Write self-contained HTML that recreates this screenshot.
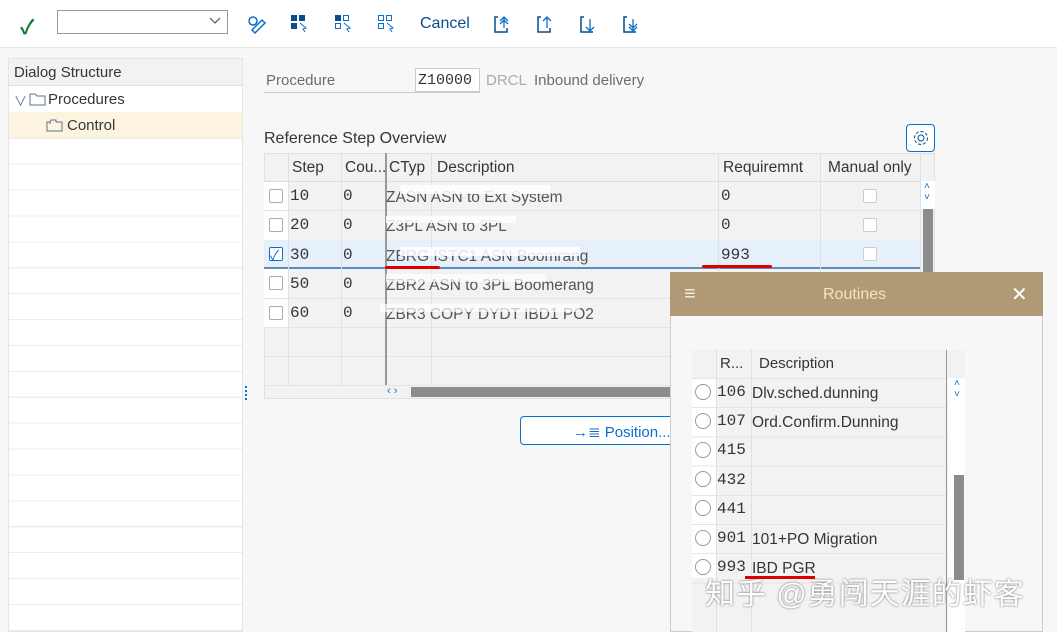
<!DOCTYPE html>
<html><head><meta charset="utf-8"><style>
*{box-sizing:border-box;margin:0;padding:0}
body{width:1057px;height:632px;overflow:hidden;background:#f7f7f7;font-family:"Liberation Sans","Noto Sans CJK SC",sans-serif;color:#32363a;position:relative;font-size:15px}
.a{position:absolute}
.mono{font-family:"Liberation Mono",monospace}
.cb{position:absolute;width:14px;height:14px;border:1px solid #aaa;background:#fff;border-radius:2px}
.rad{position:absolute;width:16px;height:16px;border:1px solid #999;border-radius:50%;background:#fff}
.ic{position:absolute;top:14px}
</style></head><body>
<div class="a" style="left:0;top:0;width:1057px;height:48px;background:#fff;border-bottom:1px solid #e5e5e5"></div>
<div class="a" style="left:20px;top:11px;color:#107e3e;font-size:20px;font-weight:bold">✓</div>
<div class="a" style="left:57px;top:10px;width:171px;height:24px;border:1px solid #999;background:#fff"></div>
<svg class="a" style="left:208px;top:16px" width="14" height="10"><path d="M2 2l5 5 5-5" stroke="#666" fill="none" stroke-width="1.3"/></svg>
<svg class="ic" style="left:247px" width="20" height="22"><circle cx="6" cy="7" r="4" stroke="#0a6ed1" fill="none" stroke-width="1.5"/><path d="M5 16l10-10 3 3-10 10z" stroke="#0a6ed1" fill="none" stroke-width="1.5"/></svg>
<svg class="ic" style="left:290px" width="20" height="20"><rect x="1" y="1" width="6" height="6" fill="#0a4d8c"/><rect x="9" y="1" width="6" height="6" fill="#0a4d8c"/><rect x="1" y="9" width="6" height="6" fill="#0a4d8c"/><path d="M10 9l6 5-3 1 2 3" stroke="#0a6ed1" fill="none"/></svg>
<svg class="ic" style="left:334px" width="20" height="20"><rect x="1" y="1" width="6" height="6" fill="#0a4d8c"/><rect x="9.5" y="1.5" width="5" height="5" stroke="#0a6ed1" fill="none"/><rect x="1.5" y="9.5" width="5" height="5" stroke="#0a6ed1" fill="none"/><path d="M10 9l6 5-3 1 2 3" stroke="#0a6ed1" fill="none"/></svg>
<svg class="ic" style="left:377px" width="20" height="20"><rect x="1.5" y="1.5" width="5" height="5" stroke="#0a6ed1" fill="none"/><rect x="9.5" y="1.5" width="5" height="5" stroke="#0a6ed1" fill="none"/><rect x="1.5" y="9.5" width="5" height="5" stroke="#0a6ed1" fill="none"/><path d="M10 9l6 5-3 1 2 3" stroke="#0a6ed1" fill="none"/></svg>
<div class="a" style="left:420px;top:15px;color:#0a4d8c;font-size:16px">Cancel</div>
<svg class="ic" style="left:492px" width="20" height="22"><path d="M6 3H3v15h12V14M6 3" stroke="#0a4d8c" fill="none" stroke-width="1.5"/><path d="M12 14V3M8 7l4-4 4 4M8 10l4-4 4 4" stroke="#0a6ed1" fill="none" stroke-width="1.3"/></svg>
<svg class="ic" style="left:535px" width="20" height="22"><path d="M6 3H3v15h12V14" stroke="#0a4d8c" fill="none" stroke-width="1.5"/><path d="M12 14V3M8 7l4-4 4 4" stroke="#0a6ed1" fill="none" stroke-width="1.3"/></svg>
<svg class="ic" style="left:578px" width="20" height="22"><path d="M6 3H3v15h12" stroke="#0a4d8c" fill="none" stroke-width="1.5"/><path d="M12 5v12M8 13l4 4 4-4" stroke="#0a6ed1" fill="none" stroke-width="1.3"/></svg>
<svg class="ic" style="left:621px" width="20" height="22"><path d="M6 3H3v15h12" stroke="#0a4d8c" fill="none" stroke-width="1.5"/><path d="M12 5v12M8 10l4 4 4-4M8 13l4 4 4-4" stroke="#0a6ed1" fill="none" stroke-width="1.3"/></svg>

<div class="a" style="left:8px;top:58px;width:235px;height:574px;background:#fff;border:1px solid #e5e5e5;
background-image:repeating-linear-gradient(to bottom,transparent 0,transparent 24.8px,#ececec 24.8px,#ececec 25.9px);background-position:0 28px"></div>
<div class="a" style="left:9px;top:59px;width:233px;height:27px;background:#f2f2f2;border-bottom:1px solid #e0e0e0"></div>
<div class="a" style="left:14px;top:64px">Dialog Structure</div>
<div class="a" style="left:9px;top:112px;width:233px;height:26px;background:#fcf4df"></div>
<div class="a" style="left:14px;top:91px;color:#5b738b;font-size:13px">∨</div>
<svg class="a" style="left:29px;top:92px" width="18" height="14"><path d="M1 2h5l2 2h8v9H1z" stroke="#5b738b" fill="none"/></svg>
<div class="a" style="left:48px;top:91px">Procedures</div>
<svg class="a" style="left:46px;top:118px" width="18" height="14"><path d="M1 4h3l1-2h5v2h6v9H1zM4 4v2" stroke="#5b738b" fill="none"/></svg>
<div class="a" style="left:67px;top:117px">Control</div>
<div class="a" style="left:245px;top:386px;width:2px;height:14px;border-left:2px dotted #0a6ed1"></div>

<div class="a" style="left:266px;top:72px;color:#6a6d70">Procedure</div>
<div class="a" style="left:264px;top:92px;width:216px;border-top:1px solid #ccc"></div>
<div class="a mono" style="left:415px;top:68px;width:65px;height:24px;border:1px solid #ccc;background:#fff;padding:3px 2px;font-size:15px">Z10000</div>
<div class="a" style="left:486px;top:72px;color:#aaa">DRCL</div>
<div class="a" style="left:534px;top:72px;color:#6a6d70">Inbound delivery</div>
<div class="a" style="left:264px;top:130px;font-size:16px">Reference Step Overview</div>
<div class="a" style="left:906px;top:124px;width:29px;height:28px;border:1.5px solid #0a6ed1;border-radius:4px;background:#fff"></div>
<svg class="a" style="left:911px;top:129px" width="20" height="18"><circle cx="10" cy="9" r="3" stroke="#0a4d8c" fill="none"/><circle cx="10" cy="9" r="6.5" stroke="#0a4d8c" fill="none" stroke-dasharray="3 2"/></svg>

<div class="a" style="left:264px;top:153px;width:671px;height:246px;background:#f2f2f2;border:1px solid #e0e0e0"></div>
<div class="a" style="left:264px;top:181px;width:24px;height:146px;background:#fff"></div>
<div class="a" style="left:264px;top:240px;width:656px;height:29px;background:#e5f0fa;border-bottom:2px solid #5b8dba"></div>
<div class="a" style="left:264px;top:181px;width:656px;height:1px;background:#ddd"></div>
<div class="a" style="left:264px;top:210px;width:656px;height:1px;background:#e4e4e4"></div>
<div class="a" style="left:264px;top:298px;width:656px;height:1px;background:#e4e4e4"></div>
<div class="a" style="left:264px;top:327px;width:656px;height:1px;background:#e4e4e4"></div>
<div class="a" style="left:264px;top:356px;width:656px;height:1px;background:#e4e4e4"></div>
<div class="a" style="left:264px;top:385px;width:656px;height:1px;background:#e4e4e4"></div>
<div class="a" style="left:288px;top:153px;width:1px;height:232px;background:#e0e0e0"></div>
<div class="a" style="left:341px;top:153px;width:1px;height:232px;background:#e0e0e0"></div>
<div class="a" style="left:385px;top:153px;width:2px;height:232px;background:#999"></div>
<div class="a" style="left:431px;top:153px;width:1px;height:232px;background:#e0e0e0"></div>
<div class="a" style="left:718px;top:153px;width:1px;height:232px;background:#e0e0e0"></div>
<div class="a" style="left:820px;top:153px;width:1px;height:232px;background:#e0e0e0"></div>
<div class="a" style="left:920px;top:153px;width:1px;height:232px;background:#e0e0e0"></div>
<div class="a" style="left:921px;top:181px;width:14px;height:28px;background:#fff"></div>
<div class="a" style="left:923px;top:209px;width:10px;height:90px;background:#8c8c8c"></div>
<div class="a" style="left:924px;top:181px;color:#0a6ed1;font-size:10px;line-height:11px">˄<br>˅</div>
<div class="a" style="left:411px;top:387px;width:260px;height:10px;background:#8c8c8c"></div>
<div class="a" style="left:387px;top:385px;color:#0a6ed1;font-size:11px">‹ ›</div>

<div class="a" style="left:292px;top:159px;font-size:15.5px">Step</div>
<div class="a" style="left:345px;top:159px;font-size:15.5px">Cou...</div>
<div class="a" style="left:389px;top:159px;font-size:15.5px">CTyp</div>
<div class="a" style="left:437px;top:159px;font-size:15.5px">Description</div>
<div class="a" style="left:723px;top:159px;font-size:15.5px">Requiremnt</div>
<div class="a" style="left:828px;top:159px;font-size:15.5px">Manual only</div>

<div class="cb" style="left:269px;top:189px"></div>
<div class="cb" style="left:269px;top:218px"></div>
<div class="cb" style="left:269px;top:247px;border-color:#0a6ed1"></div><div class="a" style="left:270px;top:245px;color:#0a6ed1;font-size:13px">✓</div>
<div class="cb" style="left:269px;top:276px"></div>
<div class="cb" style="left:269px;top:306px"></div>
<div class="cb" style="left:863px;top:189px;border-color:#ccc"></div>
<div class="cb" style="left:863px;top:218px;border-color:#ccc"></div>
<div class="cb" style="left:863px;top:247px;border-color:#ccc"></div>

<div class="a mono" style="left:290px;top:182px;line-height:29.3px;font-size:16px">10<br>20<br>30<br>50<br>60</div>
<div class="a mono" style="left:343px;top:182px;line-height:29.3px;font-size:16px">0<br>0<br>0<br>0<br>0</div>
<div class="a mono" style="left:721px;top:182px;line-height:29.3px;font-size:16px">0<br>0<br>993</div>
<div class="a" style="left:386px;top:183px;line-height:29.3px;color:#555;font-size:15.5px">ZASN ASN to Ext System<br>Z3PL ASN to 3PL<br>ZBRG ISTC1 ASN Boomrang<br>ZBR2 ASN to 3PL Boomerang<br>ZBR3 COPY DYDT IBD1 PO2</div>
<div class="a" style="left:400px;top:185px;width:150px;height:9px;background:#fff;opacity:.85"></div>
<div class="a" style="left:386px;top:216px;width:130px;height:7px;background:#fff;opacity:.85"></div>
<div class="a" style="left:400px;top:247px;width:180px;height:9px;background:#fff;opacity:.85"></div>
<div class="a" style="left:386px;top:274px;width:160px;height:8px;background:#fff;opacity:.7"></div>
<div class="a" style="left:380px;top:304px;width:200px;height:8px;background:#fff;opacity:.7"></div>
<div class="a" style="left:385px;top:266px;width:55px;height:3px;background:#d00;border-radius:2px"></div>
<div class="a" style="left:702px;top:265px;width:70px;height:3px;background:#d00;border-radius:2px"></div>

<div class="a" style="left:520px;top:416px;width:155px;height:29px;border:1.5px solid #0a6ed1;border-radius:4px;background:#fff"></div>
<div class="a" style="left:573px;top:423px;color:#0a6ed1">→≣ Position...</div>

<div class="a" style="left:670px;top:272px;width:373px;height:360px;background:#f7f7f7;border:1px solid #ccc"></div>
<div class="a" style="left:670px;top:272px;width:373px;height:44px;background:#b09a75"></div>
<div class="a" style="left:684px;top:283px;color:#f2efe6;font-size:20px">≡</div>
<div class="a" style="left:823px;top:286px;color:#f5e5b8;font-size:16px">Routines</div>
<div class="a" style="left:1011px;top:282px;color:#fff;font-size:20px">✕</div>

<div class="a" style="left:692px;top:350px;width:273px;height:282px;background:#f2f2f2"></div>
<div class="a" style="left:692px;top:378px;width:24px;height:200px;background:#fff"></div>
<div class="a" style="left:716px;top:350px;width:1px;height:282px;background:#e0e0e0"></div>
<div class="a" style="left:751px;top:350px;width:1px;height:282px;background:#e0e0e0"></div>
<div class="a" style="left:946px;top:350px;width:1px;height:282px;background:#999"></div>
<div class="a" style="left:948px;top:378px;width:17px;height:254px;background:#fff"></div>
<div class="a" style="left:954px;top:475px;width:10px;height:105px;background:#8c8c8c"></div>
<div class="a" style="left:954px;top:378px;color:#0a6ed1;font-size:10px;line-height:11px">˄<br>˅</div>
<div class="a" style="left:692px;top:378px;width:254px;height:232px;background:repeating-linear-gradient(to bottom,#e4e4e4 0,#e4e4e4 1px,transparent 1px,transparent 29.2px)"></div>
<div class="a" style="left:720px;top:355px">R...</div>
<div class="a" style="left:759px;top:355px">Description</div>
<div class="rad" style="left:695px;top:384px"></div>
<div class="rad" style="left:695px;top:413px"></div>
<div class="rad" style="left:695px;top:442px"></div>
<div class="rad" style="left:695px;top:471px"></div>
<div class="rad" style="left:695px;top:500px"></div>
<div class="rad" style="left:695px;top:530px"></div>
<div class="rad" style="left:695px;top:559px"></div>
<div class="a mono" style="left:717px;top:378px;line-height:29.2px;font-size:16px">106<br>107<br>415<br>432<br>441<br>901<br>993</div>
<div class="a" style="left:752px;top:379px;line-height:29.2px;font-size:15.5px">Dlv.sched.dunning<br>Ord.Confirm.Dunning<br><br><br><br>101+PO Migration<br>IBD PGR</div>
<div class="a" style="left:745px;top:576px;width:70px;height:3px;background:#d00"></div>
<div class="a" style="left:705px;top:569px;font-size:30px;color:#fff;opacity:.9;text-shadow:0 0 2px #555;letter-spacing:1px">知乎 @勇闯天涯的虾客</div>
</body></html>
